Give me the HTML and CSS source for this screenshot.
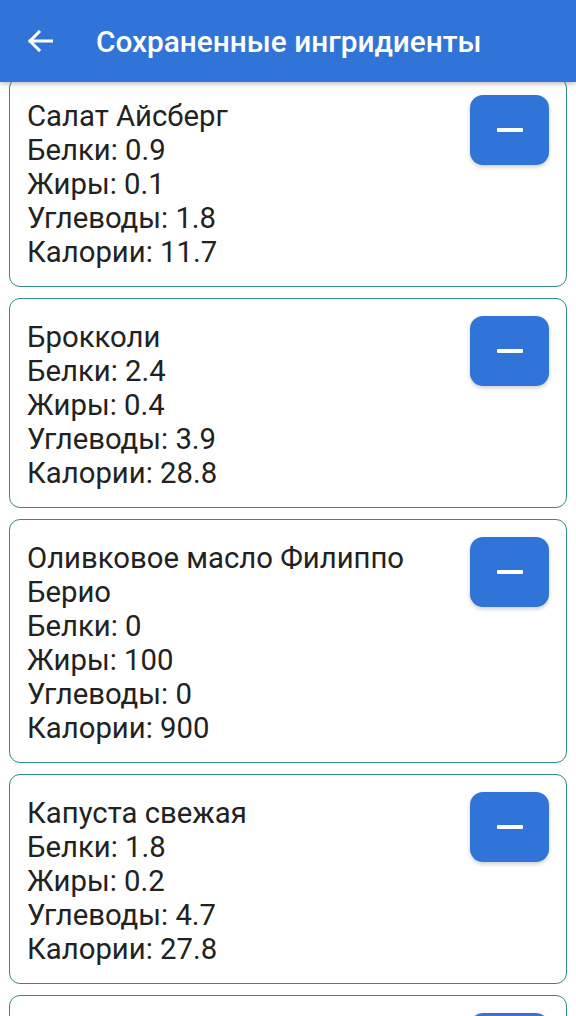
FILE: index.html
```html
<!DOCTYPE html>
<html lang="ru">
<head>
    <meta charset="UTF-8">
    <meta name="viewport" content="width=device-width, initial-scale=1.0">
    <title>Сохраненные ингридиенты</title>
    <link rel="stylesheet" href="styles.css">
</head>
<body>
    <header class="topbar">
        <button class="back" aria-label="Назад">
            <svg width="26" height="22" viewBox="0 0 26 22"><path d="M24.5 11H3 M12 2 L3 11 L12 20" fill="none" stroke="#fff" stroke-width="3" stroke-linecap="square"/></svg>
        </button>
        <h1>Сохраненные ингридиенты</h1>
    </header>

    <div class="list">
        <div class="card first">
            <div class="info">
                <div>Салат Айсберг</div>
                <div>Белки: 0.9</div>
                <div>Жиры: 0.1</div>
                <div>Углеводы: 1.8</div>
                <div>Калории: 11.7</div>
            </div>
            <button class="remove"><span></span></button>
        </div>
        <div class="card">
            <div class="info">
                <div>Брокколи</div>
                <div>Белки: 2.4</div>
                <div>Жиры: 0.4</div>
                <div>Углеводы: 3.9</div>
                <div>Калории: 28.8</div>
            </div>
            <button class="remove"><span></span></button>
        </div>
        <div class="card">
            <div class="info">
                <div>Оливковое масло Филиппо Берио</div>
                <div>Белки: 0</div>
                <div>Жиры: 100</div>
                <div>Углеводы: 0</div>
                <div>Калории: 900</div>
            </div>
            <button class="remove"><span></span></button>
        </div>
        <div class="card">
            <div class="info">
                <div>Капуста свежая</div>
                <div>Белки: 1.8</div>
                <div>Жиры: 0.2</div>
                <div>Углеводы: 4.7</div>
                <div>Калории: 27.8</div>
            </div>
            <button class="remove"><span></span></button>
        </div>
        <div class="card empty">
            <div class="info"></div>
            <button class="remove"><span></span></button>
        </div>
    </div>
</body>
</html>
```

FILE: styles.css
```css
body {
    margin: 0;
    font-family: Roboto, "Noto Sans", sans-serif;
    background: #fff;
    color: #222;
    height: 1016px;
    overflow: hidden;
}
.topbar {
    position: relative;
    z-index: 2;
    height: 82px;
    background-color: #3174d8;
    display: flex;
    align-items: center;
    box-shadow: 0 2px 5px rgba(0, 0, 0, 0.25);
}
.back {
    background: none;
    border: none;
    padding: 0;
    margin-left: 27px;
    width: 26px;
    height: 22px;
    display: flex;
}
.topbar h1 {
    margin: 0 0 0 43px;
    color: #fff;
    font-size: 29.8px;
    font-weight: 500;
}
.list {
    padding: 0 9px;
    display: flex;
    flex-direction: column;
    gap: 11px;
}
.card {
    display: flex;
    justify-content: space-between;
    align-items: flex-start;
    border: 1.5px solid #2f8c88;
    border-radius: 11px;
    padding: 21px 17px 17px 17px;
    background: #fff;
}
.card.first {
    margin-top: -5px;
}
.card.empty {
    height: 140px;
}
.info {
    font-size: 29.3px;
    line-height: 34px;
    padding-right: 20px;
}
.remove {
    flex: none;
    width: 79px;
    height: 70px;
    margin-top: -4px;
    border: none;
    border-radius: 13px;
    background-color: #3174d8;
    box-shadow: 0 2px 4px rgba(0, 0, 0, 0.2);
    display: flex;
    align-items: center;
    justify-content: center;
}
.remove span {
    width: 26px;
    height: 4px;
    background: #fff;
    border-radius: 1px;
}
```
